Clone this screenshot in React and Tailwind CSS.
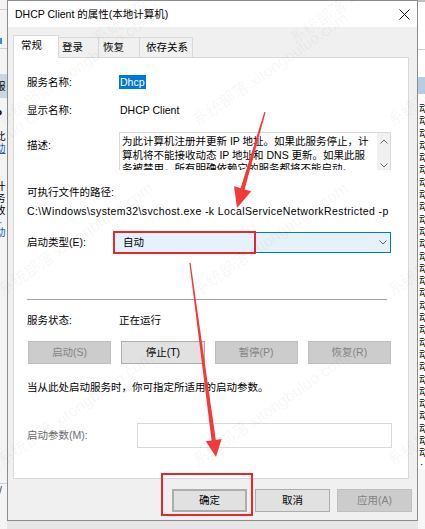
import React from "react";

const FF = "font-['Liberation_Sans','Noto_Sans_CJK_SC',sans-serif]";

function LeftStrip() {
  return (
    <div className="w-[7px] h-full shrink-0 bg-[#f4f4f4] overflow-hidden flex flex-col leading-[12px] whitespace-nowrap">
      <div className="h-[10px] shrink-0 border-b border-[#cfcfcf]" />
      <div className="h-[28px] shrink-0" />
      <div className="h-[6px] w-[2px] shrink-0 bg-[#3b8be0]" />
      <div className="h-[5px] shrink-0 border-b border-[#cfcfcf]" />
      <div className="h-[25px] shrink-0" />
      <div className="h-[24px] shrink-0 bg-[#c9d6e4] -ml-[5px] flex items-center">服</div>
      <div className="h-[10px] shrink-0" />
      <div className="h-[12px] shrink-0 -ml-[5px] font-bold">P</div>
      <div className="h-[10px] shrink-0" />
      <div className="h-[12px] shrink-0 -ml-[5px]">此</div>
      <div className="h-[12px] shrink-0 -ml-[5px] text-[#1a5fb4] underline">动</div>
      <div className="h-[26px] shrink-0" />
      <div className="h-[12px] shrink-0 -ml-[5px]">计</div>
      <div className="h-[12px] shrink-0 -ml-[5px]">务</div>
      <div className="h-[12px] shrink-0 -ml-[5px]">改</div>
      <div className="h-[10px] shrink-0 -ml-[1px] text-[#1a5fb4]">·</div>
      <div className="h-[12px] shrink-0 -ml-[5px] text-[#1a5fb4]">动</div>
      <div className="h-[245px] shrink-0" />
      <div className="h-[1px] shrink-0 bg-[#cfcfcf]" />
      <div className="h-[16px] shrink-0 -ml-[1px] text-[#333]">/</div>
    </div>
  );
}

function RightStrip() {
  const rows = [];
  for (let i = 0; i < 29; i++) rows.push(i);
  return (
    <div className="w-[7px] h-full shrink-0 bg-[#f7f7f7] overflow-hidden flex flex-col whitespace-nowrap">
      <div className="h-[2px] shrink-0 bg-[#bdbdbd]" />
      <div className="h-[48px] shrink-0 bg-white border-b border-[#cfcfcf]" />
      <div className="h-[27px] shrink-0 bg-white" />
      <div className="h-[17px] shrink-0 bg-[#b9cde2]" />
      <div className="h-[8px] shrink-0 bg-white" />
      {rows.map((i) => (
        <div key={i} className="h-[12.3px] shrink-0 leading-[12.3px] pl-[1px] bg-white">
          动
        </div>
      ))}
      <div className="h-[10px] shrink-0 leading-[10px] pl-[2px] bg-white">·</div>
    </div>
  );
}

function TitleBar() {
  return (
    <div className="h-[26px] shrink-0 bg-white flex items-center justify-between pl-[7px] pr-[7px]">
      <span className="leading-[14px]">DHCP Client 的属性(本地计算机)</span>
      <svg width="11" height="11" viewBox="0 0 11 11">
        <path d="M0.5 0.5 L10.5 10.5 M10.5 0.5 L0.5 10.5" stroke="#111" strokeWidth="1" fill="none" />
      </svg>
    </div>
  );
}

function Tabs() {
  return (
    <div className="h-[30px] shrink-0 flex items-end pl-[5px]">
      <div className="relative z-10 -mb-px h-[23px] w-[46px] bg-white border border-b-0 border-[#d9d9d9] flex items-center pl-[7px] pb-[2px]">
        常规
      </div>
      <div className="-ml-px h-[20px] w-[41px] bg-[#f0f0f0] border border-b-0 border-[#d9d9d9] flex items-center pl-[3px]">
        登录
      </div>
      <div className="-ml-px h-[20px] w-[42px] bg-[#f0f0f0] border border-b-0 border-[#d9d9d9] flex items-center pl-[4px]">
        恢复
      </div>
      <div className="-ml-px h-[20px] w-[54px] bg-[#f0f0f0] border border-b-0 border-[#d9d9d9] flex items-center pl-[6px]">
        依存关系
      </div>
    </div>
  );
}

function Chevron({ up }) {
  return (
    <svg width="8" height="5" viewBox="0 0 8 5">
      <path
        d={up ? "M0.5 4.5 L4 1 L7.5 4.5" : "M0.5 0.5 L4 4 L7.5 0.5"}
        stroke="#606060"
        strokeWidth="1"
        fill="none"
      />
    </svg>
  );
}

function Btn({ children, disabled, className = "" }) {
  return (
    <div
      className={
        "h-[23px] flex items-center justify-center border " +
        (disabled
          ? "bg-[#cccccc] border-[#bfbfbf] text-[#838383] "
          : "bg-[#e1e1e1] border-[#adadad] text-black ") +
        className
      }
    >
      {children}
    </div>
  );
}

function Panel() {
  return (
    <div className="ml-[5px] w-[396px] h-[422px] shrink-0 bg-white border border-[#d9d9d9] flex flex-col pl-[13px]">
      <div className="mt-[17px] h-[14px] flex items-center">
        <div className="w-[92px] leading-[14px]">服务名称:</div>
        <span className="h-[14px] leading-[14px] px-[1px] bg-[#0078d7] text-white">Dhcp</span>
      </div>
      <div className="mt-[14px] h-[14px] flex items-center">
        <div className="w-[92px] leading-[14px]">显示名称:</div>
        <span className="pl-[1px] leading-[14px]">DHCP Client</span>
      </div>
      <div className="mt-[15px] flex items-start">
        <div className="w-[92px] pt-[7px] leading-[13px]">描述:</div>
        <div className="w-[272px] h-[38px] border-t border-l border-r border-[#d9d9d9] flex overflow-hidden">
          <div className="flex-1 pl-[2px] pt-[2px] leading-[13.5px] whitespace-nowrap overflow-hidden">
            <div>为此计算机注册并更新 IP 地址。如果此服务停止，计</div>
            <div>算机将不能接收动态 IP 地址和 DNS 更新。如果此服</div>
            <div>务被禁用，所有明确依赖它的服务都将不能启动。</div>
          </div>
          <div className="w-[13px] bg-[#f0f0f0] flex flex-col items-center pt-[6px]">
            <Chevron up />
            <div className="h-[19px]" />
            <Chevron />
          </div>
        </div>
      </div>
      <div className="mt-[16px] h-[13px] leading-[13px]">可执行文件的路径:</div>
      <div className="mt-[6px] h-[13px] leading-[13px] whitespace-nowrap tracking-[0.4px]">
        C:\Windows\system32\svchost.exe -k LocalServiceNetworkRestricted -p
      </div>
      <div className="mt-[14px] h-[21px] flex items-center">
        <div className="w-[86px] leading-[13px]">启动类型(E):</div>
        <div className="relative w-[278px] h-[21px] bg-[#e5f1fb] border border-[#0078d7] flex items-center justify-between pl-[9px] pr-[3px]">
          <span className="leading-[13px]">自动</span>
          <Chevron />
          <div className="absolute left-[-1px] top-[-2px] w-[143px] h-[23px] border-2 border-[#e8262c]" />
        </div>
      </div>
      <div className="mt-[46px] h-px w-[360px] bg-[#a0a0a0]" />
      <div className="mt-[14px] h-[13px] flex items-center">
        <div className="w-[92px] leading-[13px]">服务状态:</div>
        <span className="leading-[13px]">正在运行</span>
      </div>
      <div className="mt-[14px] ml-[1px] w-[363px] grid grid-cols-4 gap-[10px]">
        <Btn disabled>启动(S)</Btn>
        <Btn>停止(T)</Btn>
        <Btn disabled>暂停(P)</Btn>
        <Btn disabled>恢复(R)</Btn>
      </div>
      <div className="mt-[17px] h-[13px] leading-[13px]">当从此处启动服务时，你可指定所适用的启动参数。</div>
      <div className="mt-[29px] h-[25px] flex items-center">
        <div className="w-[110px] leading-[13px] text-[#6d6d6d]">启动参数(M):</div>
        <div className="w-[255px] h-[25px] bg-white border border-[#d9d9d9]" />
      </div>
    </div>
  );
}

function Footer() {
  return (
    <div className="mt-[10px] pl-[164px] flex">
      <div className="relative">
        <Btn className="w-[75px] border-2 border-[#0078d7]">确定</Btn>
        <div className="absolute left-[-11px] top-[-16px] w-[92px] h-[43px] border-2 border-[#e8262c]" />
      </div>
      <Btn className="ml-[8px] w-[75px]">取消</Btn>
      <Btn disabled className="ml-[7px] w-[75px]">应用(A)</Btn>
    </div>
  );
}

function Dialog() {
  return (
    <div className="w-[411px] h-[521px] shrink-0 border border-[#8c8c8c] bg-[#f0f0f0] flex flex-col">
      <TitleBar />
      <Tabs />
      <Panel />
      <Footer />
    </div>
  );
}

function Watermarks() {
  const spots = [
    "left-[5px] top-[112px]",
    "left-[200px] top-[112px]",
    "left-[395px] top-[112px]",
    "left-[5px] top-[282px]",
    "left-[200px] top-[282px]",
    "left-[395px] top-[282px]",
    "left-[5px] top-[452px]",
    "left-[200px] top-[452px]",
    "left-[395px] top-[452px]",
    "left-[100px] top-[30px]",
    "left-[-95px] top-[200px]",
    "left-[297px] top-[30px]",
  ];
  return (
    <div className="absolute inset-0 pointer-events-none overflow-hidden">
      {spots.map((s, i) => (
        <span
          key={i}
          className={
            "absolute whitespace-nowrap origin-bottom-left -rotate-[35deg] text-[16px] leading-[18px] text-black/[0.05] " +
            s
          }
        >
          系统部落 xitongbuluo.com
        </span>
      ))}
    </div>
  );
}

function Arrows() {
  return (
    <svg className="absolute inset-0 pointer-events-none" width="425" height="529" viewBox="0 0 425 529">
      <polygon
        points="264.4,111.8 265.6,112.2 244.6,189.4 251.2,191.3 237,208 234.0,186.3 240.6,188.2"
        fill="#f23a3a"
      />
      <polygon
        points="189.4,263.1 190.6,262.9 215.8,440.0 221.6,439.1 216,457 205.8,441.3 211.6,440.4"
        fill="#f23a3a"
      />
    </svg>
  );
}

export default function App() {
  return (
    <div className={"relative w-[425px] h-[529px] overflow-hidden bg-[#e6e6e6] flex text-[10.5px] text-black " + FF}>
      <LeftStrip />
      <Dialog />
      <RightStrip />
      <Watermarks />
      <Arrows />
    </div>
  );
}
